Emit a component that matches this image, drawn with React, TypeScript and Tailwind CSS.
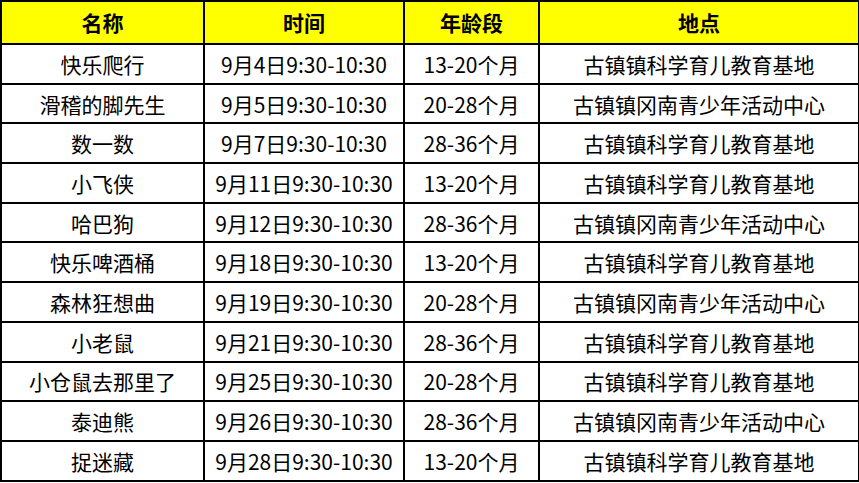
const rows = [
  ["快乐爬行", "9月4日9:30-10:30", "13-20个月", "古镇镇科学育儿教育基地"],
  ["滑稽的脚先生", "9月5日9:30-10:30", "20-28个月", "古镇镇冈南青少年活动中心"],
  ["数一数", "9月7日9:30-10:30", "28-36个月", "古镇镇科学育儿教育基地"],
  ["小飞侠", "9月11日9:30-10:30", "13-20个月", "古镇镇科学育儿教育基地"],
  ["哈巴狗", "9月12日9:30-10:30", "28-36个月", "古镇镇冈南青少年活动中心"],
  ["快乐啤酒桶", "9月18日9:30-10:30", "13-20个月", "古镇镇科学育儿教育基地"],
  ["森林狂想曲", "9月19日9:30-10:30", "20-28个月", "古镇镇冈南青少年活动中心"],
  ["小老鼠", "9月21日9:30-10:30", "28-36个月", "古镇镇科学育儿教育基地"],
  ["小仓鼠去那里了", "9月25日9:30-10:30", "20-28个月", "古镇镇科学育儿教育基地"],
  ["泰迪熊", "9月26日9:30-10:30", "28-36个月", "古镇镇冈南青少年活动中心"],
  ["捉迷藏", "9月28日9:30-10:30", "13-20个月", "古镇镇科学育儿教育基地"],
];

const headers = ["名称", "时间", "年龄段", "地点"];

export default function App() {
  return (
    <div className="w-[859px] h-[483px] bg-white overflow-hidden font-['Noto_Sans_CJK_SC','Noto_Sans',sans-serif] text-black">
      <table className="w-[858px] border-collapse table-fixed text-[21px] leading-none">
        <colgroup>
          <col className="w-[203px]" />
          <col className="w-[200px]" />
          <col className="w-[135px]" />
          <col className="w-[320px]" />
        </colgroup>
        <thead>
          <tr className="h-[43px] bg-[#ffff00]">
            {headers.map((h) => (
              <th key={h} className="border-2 border-black text-center font-bold">
                {h}
              </th>
            ))}
          </tr>
        </thead>
        <tbody>
          {rows.map((r, i) => (
            <tr key={i} className="h-[39.7px]">
              {r.map((c, j) => (
                <td key={j} className="border-2 border-black text-center align-middle pt-px">
                  {c}
                </td>
              ))}
            </tr>
          ))}
        </tbody>
      </table>
    </div>
  );
}
